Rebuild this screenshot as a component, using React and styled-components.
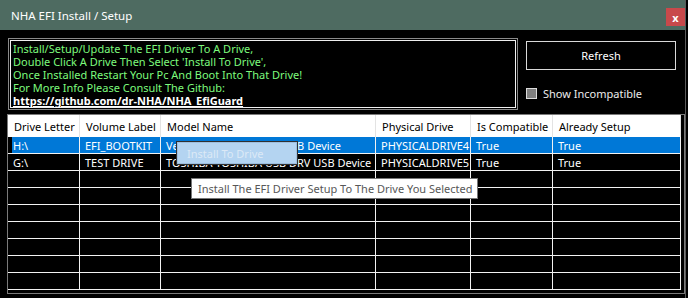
import React, { useState } from 'react'
import styled, { createGlobalStyle } from 'styled-components'

const GlobalStyle = createGlobalStyle`
  html, body {
    margin: 0;
    padding: 0;
    background: #000;
  }
  body {
    font-family: "Noto Sans", "Open Sans", sans-serif;
    font-size: 11px;
  }
`

const columns = [
  { title: 'Drive Letter', width: 72 },
  { title: 'Volume Label', width: 81 },
  { title: 'Model Name', width: 215 },
  { title: 'Physical Drive', width: 95 },
  { title: 'Is Compatible', width: 82 },
  { title: 'Already Setup', width: 128 },
]

const drives = [
  ['H:\\', 'EFI_BOOTKIT', 'Verbatim STORE N GO USB Device', 'PHYSICALDRIVE4', 'True', 'True'],
  ['G:\\', 'TEST DRIVE', 'TOSHIBA TOSHIBA USB DRV USB Device', 'PHYSICALDRIVE5', 'True', 'True'],
]

const EMPTY_ROWS = 7

function App() {
  const [selected, setSelected] = useState(0)
  const [showAll, setShowAll] = useState(false)

  const rows = [...drives, ...Array.from({ length: EMPTY_ROWS }, () => columns.map(() => ''))]

  return (
    <Window>
      <GlobalStyle />
      <TitleBar>
        <span>NHA EFI Install / Setup</span>
        <CloseButton>x</CloseButton>
      </TitleBar>

      <Body>
        <TopRow>
          <InfoBox>
            <p>Install/Setup/Update The EFI Driver To A Drive,</p>
            <p>Double Click A Drive Then Select 'Install To Drive',</p>
            <p>Once Installed Restart Your Pc And Boot Into That Drive!</p>
            <p>For More Info Please Consult The Github:</p>
            <a href='#'>https://github.com/dr-NHA/NHA_EfiGuard</a>
          </InfoBox>

          <SidePanel>
            <RefreshButton>Refresh</RefreshButton>
            <CheckRow onClick={() => setShowAll(!showAll)}>
              <CheckBox $checked={showAll} />
              <span>Show Incompatible</span>
            </CheckRow>
          </SidePanel>
        </TopRow>

        <Grid>
          <HeaderRow>
            {columns.map(c => (
              <HeaderCell key={c.title} $width={c.width}>{c.title}</HeaderCell>
            ))}
          </HeaderRow>
          {rows.map((row, i) => (
            <Row key={i} onClick={() => row[0] && setSelected(i)}>
              {row.map((value, j) => (
                <Cell
                  key={j}
                  $width={columns[j].width}
                  $selected={selected === i}
                  $first={j === 0}
                >
                  {value}
                </Cell>
              ))}
            </Row>
          ))}
        </Grid>
      </Body>

      <ContextMenu>
        <MenuItem>Install To Drive</MenuItem>
      </ContextMenu>
      <Tooltip>Install The EFI Driver Setup To The Drive You Selected</Tooltip>
    </Window>
  )
}

const Window = styled.div`
  position: relative;
  width: 685px;
  height: 298px;
  background: #000;
  border-right: 1px solid #5a5a5a;
  overflow: hidden;
`

const TitleBar = styled.div`
  display: flex;
  align-items: center;
  justify-content: space-between;
  height: 30px;
  padding-left: 11px;
  background: #4e6b61;
  color: #fff;
  font-size: 11.5px;
`

const CloseButton = styled.div`
  width: 19px;
  height: 18px;
  margin-top: 4px;
  display: flex;
  align-items: center;
  justify-content: center;
  background: #c8494b;
  color: #fff;
  font-weight: 700;
  font-size: 11px;
  line-height: 1;
`

const Body = styled.div`
  padding: 8px 0 0 8px;
`

const TopRow = styled.div`
  display: flex;
  gap: 8px;
`

const InfoBox = styled.div`
  box-sizing: border-box;
  width: 510px;
  height: 72px;
  padding: 3px 4px;
  border: 1px solid #8a8a8a;
  box-shadow: inset 0 0 0 1px #000, inset 0 0 0 2px #f0f0f0;
  color: #7dfa7d;
  line-height: 13px;
  white-space: nowrap;

  p {
    margin: 0;
  }

  a {
    color: #fff;
    font-weight: 700;
    text-decoration: underline;
  }
`

const SidePanel = styled.div`
  display: flex;
  flex-direction: column;
  gap: 16px;
  padding-top: 3px;
`

const RefreshButton = styled.button`
  width: 150px;
  height: 29px;
  background: #000;
  border: 1px solid #d8d8d8;
  color: #fff;
  font-family: inherit;
  font-size: 11px;
`

const CheckRow = styled.label`
  display: flex;
  align-items: center;
  gap: 6px;
  color: #ececec;
`

const CheckBox = styled.span`
  box-sizing: border-box;
  width: 11px;
  height: 11px;
  border: 1px solid #dcdcdc;
  background: ${p => (p.$checked ? '#0078d7' : '#7f7f7f')};
`

const Grid = styled.div`
  box-sizing: border-box;
  width: 678px;
  height: 180px;
  margin: 4px 0 0 -1px;
  border: 1px solid #7a7a7a;
  overflow: hidden;
`

const HeaderRow = styled.div`
  display: flex;
  height: 22px;
  background: #fff;
  width: 673px;
`

const HeaderCell = styled.div`
  box-sizing: border-box;
  width: ${p => p.$width}px;
  padding-left: 6px;
  display: flex;
  align-items: center;
  white-space: nowrap;
  border-right: 1px solid #e3e3e3;
  color: #000;
`

const Row = styled.div`
  display: flex;
  height: 17px;
`

const Cell = styled.div`
  box-sizing: border-box;
  width: ${p => p.$width}px;
  padding-left: 5px;
  padding-top: 1px;
  display: flex;
  align-items: center;
  white-space: nowrap;
  overflow: hidden;
  border-right: 1px solid #f2f2f2;
  border-bottom: 1px solid #f2f2f2;
  color: #fff;
  background: ${p =>
    p.$selected
      ? p.$first
        ? 'linear-gradient(to right, #000 4px, #0078d7 4px)'
        : '#0078d7'
      : '#000'};
`

const ContextMenu = styled.div`
  position: absolute;
  left: 176px;
  top: 141px;
  box-sizing: border-box;
  width: 122px;
  height: 24px;
  border: 1px solid #303030;
  box-shadow: inset 0 0 0 1px #9dbfe0;
  background: #b4d4f1;
  display: flex;
  align-items: center;
`

const MenuItem = styled.div`
  padding-left: 10px;
  color: #dce9f6;
`

const Tooltip = styled.div`
  position: absolute;
  left: 191px;
  top: 178px;
  box-sizing: border-box;
  width: 287px;
  height: 21px;
  padding-left: 6px;
  display: flex;
  align-items: center;
  white-space: nowrap;
  background: #fff;
  border: 1px solid #767676;
  color: #575757;
`

export default App
